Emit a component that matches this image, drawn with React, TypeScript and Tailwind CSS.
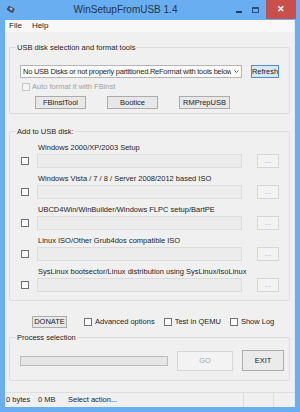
import type React from "react";

const font = { fontFamily: '"Liberation Sans", Arial, sans-serif' };

const Check: React.FC<{ disabled?: boolean }> = ({ disabled }) => (
  <div
    className={`w-[8px] h-[8px] shrink-0 border ${
      disabled ? "border-[#c8c8c8] bg-[#f4f4f4]" : "border-[#707070] bg-white"
    }`}
  />
);

const Btn: React.FC<{ label: string; className?: string; disabled?: boolean }> = ({
  label,
  className = "",
  disabled,
}) => (
  <div
    className={`flex items-center justify-center border ${
      disabled
        ? "border-[#d6d6d6] bg-[#f3f3f3] text-[#a8a8a8]"
        : "border-[#acacac] bg-[#e8e8e8] text-[#222]"
    } ${className}`}
  >
    {label}
  </div>
);

const items = [
  "Windows 2000/XP/2003 Setup",
  "Windows Vista / 7 / 8 / Server 2008/2012 based ISO",
  "UBCD4Win/WinBuilder/Windows FLPC setup/BartPE",
  "Linux ISO/Other Grub4dos compatible ISO",
  "SysLinux bootsector/Linux distribution using SysLinux/IsoLinux",
];

const App: React.FC = () => {
  return (
    <div
      className="w-[300px] h-[412px] bg-[#68aef0] flex flex-col text-[7.5px] text-[#1e1e1e] leading-none"
      style={font}
    >
      {/* Title bar */}
      <div className="h-[20px] flex items-center relative shrink-0">
        <svg width="10" height="10" viewBox="0 0 10 10" className="ml-[6px]">
          <rect x="1" y="2" width="7" height="5" rx="1" fill="#3c4f66" transform="rotate(30 5 5)" />
          <rect x="3" y="3" width="3" height="2" fill="#a9c3dc" transform="rotate(30 5 5)" />
        </svg>
        <div className="flex-1 text-center text-[10px] text-[#23354c] pl-[4px]">WinSetupFromUSB 1.4</div>
        <div className="flex items-start h-full">
          <div className="w-[16px] h-full flex items-center justify-center">
            <div className="w-[6px] h-[2px] bg-[#1f3d66] mt-[3px]" />
          </div>
          <div className="w-[16px] h-full flex items-center justify-center">
            <div className="w-[7px] h-[6px] border border-[#2a4f80] border-t-2" />
          </div>
          <div className="w-[30px] h-[19px] bg-[#c9504a] flex items-center justify-center text-white text-[9px] font-bold mr-[4px] ml-[3px]">
            ✕
          </div>
        </div>
      </div>

      {/* Client */}
      <div className="flex-1 mx-[5px] mb-[5px] bg-[#f0f0f0] flex flex-col border-r border-[#d8ecfb]">
        {/* Menu */}
        <div className="h-[12px] bg-[#f8f8f8] flex items-center gap-[10px] pl-[4px] text-[8px] shrink-0">
          <span>File</span>
          <span>Help</span>
        </div>

        <div className="flex-1 flex flex-col px-[4px]">
          {/* Group 1 */}
          <div className="mt-[15px] h-[67px] border border-[#dcdcdc] rounded-[2px] relative flex flex-col px-[10px]">
            <span className="absolute -top-[4px] left-[6px] bg-[#f0f0f0] px-[1px]">USB disk selection and format tools</span>
            <div className="flex items-center mt-[17px]">
              <div className="w-[223px] h-[13px] bg-white border border-[#b5b5b5] flex items-center pl-[2px] relative overflow-hidden">
                <span className="whitespace-nowrap tracking-[-0.25px]">No USB Disks or not properly partitioned.ReFormat with tools below</span>
                <div className="absolute right-0 top-0 h-full w-[10px] bg-white flex items-center justify-center">
                  <svg width="5" height="3" viewBox="0 0 5 3">
                    <path d="M0.5 0.5 L2.5 2.5 L4.5 0.5" stroke="#555" fill="none" strokeWidth="0.9" />
                  </svg>
                </div>
              </div>
              <Btn label="Refresh" className="ml-[9px] w-[28px] h-[13px] !border-[#4f8fd6] !bg-[#d9e8f8]" />
            </div>
            <div className="flex items-center gap-[2px] mt-[5px] ml-[2px] text-[#a0a0a0]">
              <Check disabled />
              <span>Auto format it with FBinst</span>
            </div>
            <div className="flex mt-[5px] ml-[15px] gap-[21px]">
              <Btn label="FBinstTool" className="w-[51px] h-[13px]" />
              <Btn label="Bootice" className="w-[51px] h-[13px]" />
              <Btn label="RMPrepUSB" className="w-[51px] h-[13px]" />
            </div>
          </div>

          {/* Group 2 */}
          <div className="mt-[17px] h-[170px] border border-[#dcdcdc] rounded-[2px] relative flex flex-col pl-[11px] pt-[12px]">
            <span className="absolute -top-[4px] left-[6px] bg-[#f0f0f0] px-[1px]">Add to USB disk:</span>
            {items.map((label) => (
              <div key={label} className="h-[31px] flex flex-col">
                <span className="ml-[17px] h-[9px] whitespace-nowrap">{label}</span>
                <div className="flex items-center mt-[1px]">
                  <Check />
                  <div className="ml-[8px] w-[205px] h-[14px] bg-[#ececec] border border-[#dcdcdc]" />
                  <Btn label="..." className="ml-[15px] w-[22px] h-[14px]" disabled />
                </div>
              </div>
            ))}
          </div>

          {/* Options row */}
          <div className="flex items-center mt-[15px] h-[12px]">
            <Btn label="DONATE" className="ml-[23px] w-[35px] h-[12px]" />
            <div className="flex items-center gap-[3px] ml-[17px]">
              <Check />
              <span>Advanced options</span>
            </div>
            <div className="flex items-center gap-[3px] ml-[9px]">
              <Check />
              <span>Test in QEMU</span>
            </div>
            <div className="flex items-center gap-[3px] ml-[9px]">
              <Check />
              <span>Show Log</span>
            </div>
          </div>

          {/* Group 3 */}
          <div className="mt-[9px] h-[44px] border border-[#dcdcdc] rounded-[2px] relative flex items-center pl-[10px]">
            <span className="absolute -top-[4px] left-[6px] bg-[#f0f0f0] px-[1px]">Process selection</span>
            <div className="w-[148px] h-[10px] bg-[#e6e6e6] border border-[#bcbcbc] mt-[3px]" />
            <Btn label="GO" className="ml-[9px] w-[56px] h-[20px] mt-[3px]" disabled />
            <Btn label="EXIT" className="ml-[9px] w-[42px] h-[21px] mt-[3px] !bg-[#ebebeb]" />
          </div>
        </div>

        {/* Status bar */}
        <div className="h-[15px] border-t border-[#dedede] flex items-center shrink-0 mt-[10px]">
          <span className="w-[32px] pl-[1px]">0 bytes</span>
          <span className="w-[30px] pl-[1px]">0 MB</span>
          <span className="flex-1 pl-[1px]">Select action...</span>
          <div className="w-px h-full bg-[#dcdcdc]" />
          <div className="w-[29px]" />
          <div className="w-px h-full bg-[#dcdcdc]" />
          <div className="w-[20px]" />
        </div>
      </div>
    </div>
  );
};

export default App;
